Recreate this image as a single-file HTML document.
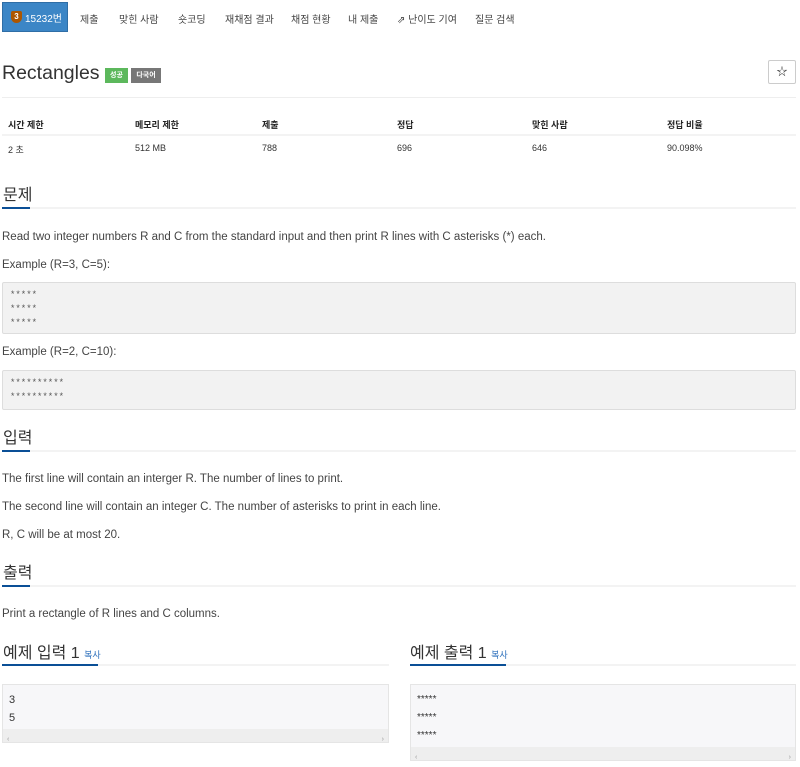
<!DOCTYPE html>
<html><head><meta charset="utf-8"><style>
*{margin:0;padding:0;box-sizing:border-box}
body{width:800px;height:763px;background:#fff;font-family:"Liberation Sans","Noto Sans CJK KR",sans-serif;color:#333;position:relative;overflow:hidden}
.a{position:absolute;white-space:nowrap}
.nav{font-size:10px;color:#444;top:11px}
.h{font-size:16px;color:#333}
.ul{position:absolute;height:2px;background:#0a4f96}
.ln{position:absolute;height:2px;background:#f3f3f3}
.t{font-size:11.5px;color:#444}
.pre{position:absolute;background:#f2f2f2;border:1px solid #ddd;border-radius:2px;font-family:"Liberation Mono",monospace;font-size:9px;color:#555;line-height:14px;padding:5px 7px}
.sp{position:absolute;background:#f7f7f9;border:1px solid #e5e5e5;font-size:11px;color:#333;line-height:18px;padding:5px 6px}
.sb{position:absolute;left:0;right:0;bottom:0;height:13px;background:#eee;font-size:7px;color:#999}
</style></head><body>
<div class="a" style="left:2px;top:2px;width:66px;height:30px;background:#3c86c6;border:1px solid #2f6ea6"></div>
<div class="a" style="left:11px;top:11px;width:11px;height:12px;background:#ad5600;border-radius:2px 2px 6px 6px;color:#fff;font-size:8px;font-weight:bold;text-align:center;line-height:12px">3</div>
<div class="a" style="left:25px;top:10px;font-size:10px;color:#fff">15232번</div>
<div class="a nav" style="left:80px">제출</div>
<div class="a nav" style="left:119px">맞힌 사람</div>
<div class="a nav" style="left:178px">숏코딩</div>
<div class="a nav" style="left:225px">재채점 결과</div>
<div class="a nav" style="left:291px">채점 현황</div>
<div class="a nav" style="left:348px">내 제출</div>
<div class="a nav" style="left:397px">⇗ 난이도 기여</div>
<div class="a nav" style="left:475px">질문 검색</div>

<div class="a" style="left:2px;top:62px;font-size:19.5px;color:#333">Rectangles</div>
<div class="a" style="left:105px;top:68px;width:23px;height:15px;background:#5cb85c;color:#fff;font-size:7px;font-weight:bold;text-align:center;line-height:15px">성공</div>
<div class="a" style="left:131px;top:68px;width:30px;height:15px;background:#777;color:#fff;font-size:7px;font-weight:bold;text-align:center;line-height:15px">다국어</div>
<div class="a" style="left:768px;top:60px;width:28px;height:24px;border:1px solid #ccc;border-radius:2px;text-align:center;line-height:22px;font-size:11px;color:#333">☆</div>
<div class="ln" style="left:2px;right:4px;top:97px;height:1px;background:#eee"></div>

<div class="a" style="left:8px;top:118px;font-size:9px;font-weight:bold;color:#222">시간 제한</div>
<div class="a" style="left:135px;top:118px;font-size:9px;font-weight:bold;color:#222">메모리 제한</div>
<div class="a" style="left:262px;top:118px;font-size:9px;font-weight:bold;color:#222">제출</div>
<div class="a" style="left:397px;top:118px;font-size:9px;font-weight:bold;color:#222">정답</div>
<div class="a" style="left:532px;top:118px;font-size:9px;font-weight:bold;color:#222">맞힌 사람</div>
<div class="a" style="left:667px;top:118px;font-size:9px;font-weight:bold;color:#222">정답 비율</div>
<div class="ln" style="left:2px;right:4px;top:134px"></div>
<div class="a" style="left:8px;top:143px;font-size:9px;color:#333">2 초</div>
<div class="a" style="left:135px;top:143px;font-size:9px">512 MB</div>
<div class="a" style="left:262px;top:143px;font-size:9px">788</div>
<div class="a" style="left:397px;top:143px;font-size:9px">696</div>
<div class="a" style="left:532px;top:143px;font-size:9px">646</div>
<div class="a" style="left:667px;top:143px;font-size:9px">90.098%</div>

<div class="a h" style="left:3px;top:181px">문제</div>
<div class="ln" style="left:2px;right:4px;top:207px"></div>
<div class="ul" style="left:2px;width:28px;top:207px"></div>
<div class="a t" style="left:2px;top:231px">Read two integer numbers R and C from the standard input and then print R lines with C asterisks (*) each.</div>
<div class="a t" style="left:2px;top:259px">Example (R=3, C=5):</div>
<div class="pre" style="left:2px;top:282px;width:794px;height:52px">*****<br>*****<br>*****</div>
<div class="a t" style="left:2px;top:346px">Example (R=2, C=10):</div>
<div class="pre" style="left:2px;top:370px;width:794px;height:40px">**********<br>**********</div>

<div class="a h" style="left:3px;top:424px">입력</div>
<div class="ln" style="left:2px;right:4px;top:450px"></div>
<div class="ul" style="left:2px;width:28px;top:450px"></div>
<div class="a t" style="left:2px;top:473px">The first line will contain an interger R. The number of lines to print.</div>
<div class="a t" style="left:2px;top:501px">The second line will contain an integer C. The number of asterisks to print in each line.</div>
<div class="a t" style="left:2px;top:529px">R, C will be at most 20.</div>

<div class="a h" style="left:3px;top:559px">출력</div>
<div class="ln" style="left:2px;right:4px;top:585px"></div>
<div class="ul" style="left:2px;width:28px;top:585px"></div>
<div class="a t" style="left:2px;top:608px">Print a rectangle of R lines and C columns.</div>

<div class="a h" style="left:3px;top:639px">예제 입력 1 <span style="font-size:9px;color:#2a6ebb">복사</span></div>
<div class="ln" style="left:2px;width:387px;top:664px"></div>
<div class="ul" style="left:2px;width:96px;top:664px"></div>
<div class="a h" style="left:410px;top:639px">예제 출력 1 <span style="font-size:9px;color:#2a6ebb">복사</span></div>
<div class="ln" style="left:410px;width:386px;top:664px"></div>
<div class="ul" style="left:410px;width:96px;top:664px"></div>

<div class="sp" style="left:2px;top:684px;width:387px;height:59px;padding-top:6px">3<br>5<div class="sb"><span style="position:absolute;left:4px;top:2px">‹</span><span style="position:absolute;right:4px;top:2px">›</span></div></div>
<div class="sp" style="left:410px;top:684px;width:386px;height:77px;padding-top:6px;font-size:10px">*****<br>*****<br>*****<div class="sb"><span style="position:absolute;left:4px;top:2px">‹</span><span style="position:absolute;right:4px;top:2px">›</span></div></div>
</body></html>
